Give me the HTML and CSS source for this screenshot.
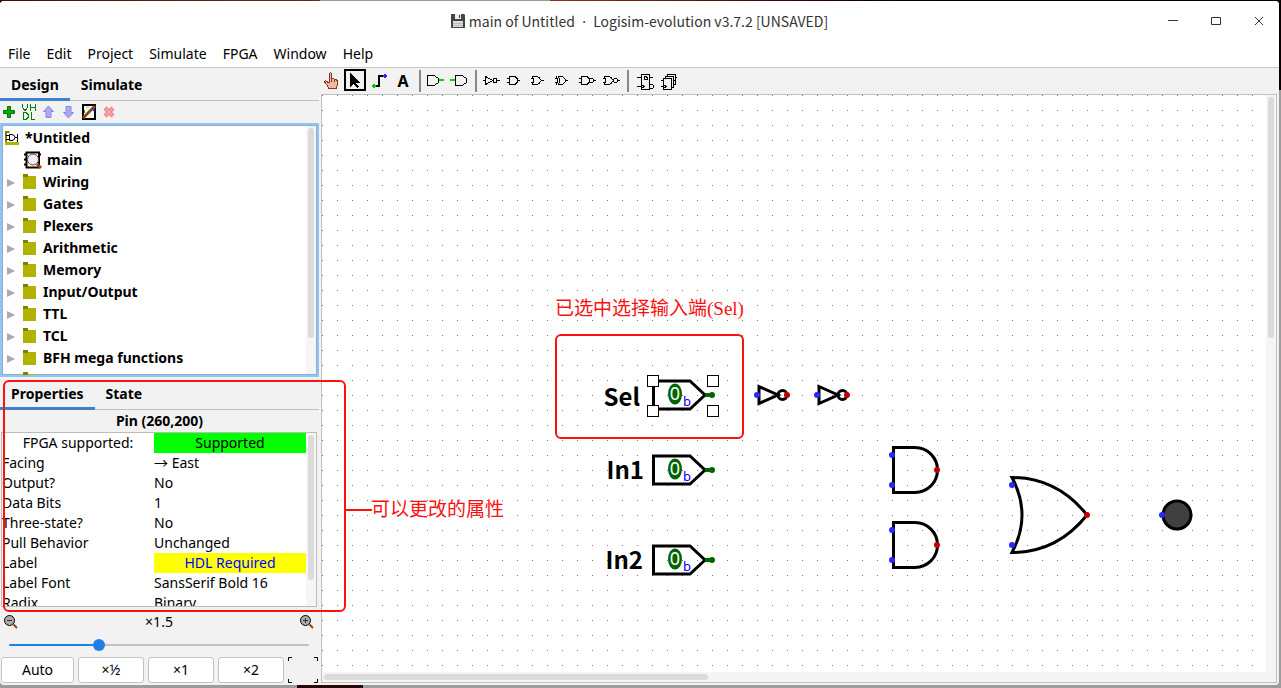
FILE: index.html
```html
<!DOCTYPE html>
<html lang="en">
<head>
<meta charset="UTF-8">
<title>main of Untitled · Logisim-evolution v3.7.2 [UNSAVED]</title>
<link rel="stylesheet" href="styles.css">
</head>
<body>
<div class="desktop-top"></div>
<div class="window">
  <header class="titlebar">
    <svg class="floppy" width="14" height="14" viewBox="0 0 14 14">
      <path d="M0 0H13L14 1V14H0Z" fill="#444"/>
      <path d="M4 0H10V5H4Z" fill="#eee"/>
      <path d="M8 1H9V4H8Z" fill="#333"/>
      <path d="M2 7H12V13H2Z" fill="#ddd"/>
      <path d="M2 9.500H12M2 11.500H12" stroke="#bbb"/>
    </svg>
    <h1>main of Untitled<span class="dot">&nbsp; ·&nbsp; </span>Logisim-evolution v3.7.2 [UNSAVED]</h1>
    <div class="window-buttons">
      <button aria-label="Minimize"><svg width="12" height="12"><path d="M1 5.500H11"/></svg></button>
      <button aria-label="Maximize"><svg width="12" height="12"><path d="M1.500 2.500H10.500V9.500H1.500Z"/></svg></button>
      <button aria-label="Close"><svg width="12" height="12"><path d="M2 2L10 10M10 2L2 10"/></svg></button>
    </div>
  </header>

  <nav class="menubar">
    <button>File</button>
    <button>Edit</button>
    <button>Project</button>
    <button>Simulate</button>
    <button>FPGA</button>
    <button>Window</button>
    <button>Help</button>
  </nav>

  <div class="workspace">
    <aside class="sidebar">
      <div class="tabs">
        <button class="tab active">Design</button>
        <button class="tab">Simulate</button>
      </div>
      <div class="tree-tools">
        <button aria-label="Add circuit"><svg width="14" height="20"><path d="M5.500 4.500H8.500V8.500H12.500V11.500H8.500V15.500H5.500V11.500H1.500V8.500H5.500Z" fill="#00b000" stroke="#006c00"/></svg></button>
        <button aria-label="Add VHDL"><svg width="14" height="20" fill="none" stroke="#008000" shape-rendering="crispEdges"><path d="M.5 2V5L3 9L5.500 5V2M8.500 2V9M13.500 2V9M8.500 5.500H13.500M1.500 10.500V17.500H4L6.500 15V13L4 10.500ZM9.500 10V17.500H13"/></svg></button>
        <button aria-label="Move up"><svg width="14" height="20"><path d="M6.500 4L11.500 9.500H9V15.500H4V9.500H1.500Z" fill="#a9a9f8" stroke="#8888e0"/></svg></button>
        <button aria-label="Move down"><svg width="14" height="20"><path d="M6.500 16L11.500 10.500H9V4.500H4V10.500H1.500Z" fill="#a9a9f8" stroke="#8888e0"/></svg></button>
        <button aria-label="Edit appearance"><svg width="14" height="20"><path d="M1 3H13V17H1Z" fill="#fff" stroke="#000" stroke-width="2"/><path d="M4 5H7M5 6V7" stroke="#bbb"/><path d="M2.500 8V11" stroke="#0a0"/><path d="M12 7V9" stroke="#22f" stroke-width="2"/><path d="M1 16L13 4" stroke="#8b4513" stroke-width="3"/></svg></button>
        <button aria-label="Delete circuit"><svg width="14" height="20"><path d="M3 6L11 14M11 6L3 14" stroke="#e27878" stroke-width="4"/><path d="M3 6L11 14M11 6L3 14" stroke="#f8a8a8" stroke-width="2"/></svg></button>
      </div>

      <div class="tree">
        <ul>
          <li class="root"><svg width="16" height="16"><path d="M1 1H5L6 3H13V15H1Z" fill="#808000"/><path d="M3 3H13V12H3Z" fill="#fff"/><path d="M1 12H15V15H1Z" fill="#b2b200"/><path d="M2 5.500H5M2 9.500H5M5.500 4.500H8Q11 5 11 7.500Q11 10 8 10.500H5.500ZM11 7.500H13M13.500 4V12" fill="none" stroke="#000"/></svg>*Untitled</li>
          <li class="circuit"><svg width="20" height="20"><path d="M3.500 2.500H16V17.500H3.500Z" fill="#fff" stroke="#000" stroke-width="2"/><path d="M1 4.500H3M1 9.500H3M1 14.500H3M16 4.500H18" stroke="#000" stroke-width="2"/><circle cx="10" cy="9.500" r="5.500" fill="#eeeeff" stroke="#804020"/><path d="M14 14L18 18" stroke="#8b4513" stroke-width="3"/></svg>main</li>
          <li><i class="twisty"></i><i class="folder"></i>Wiring</li>
          <li><i class="twisty"></i><i class="folder"></i>Gates</li>
          <li><i class="twisty"></i><i class="folder"></i>Plexers</li>
          <li><i class="twisty"></i><i class="folder"></i>Arithmetic</li>
          <li><i class="twisty"></i><i class="folder"></i>Memory</li>
          <li><i class="twisty"></i><i class="folder"></i>Input/Output</li>
          <li><i class="twisty"></i><i class="folder"></i>TTL</li>
          <li><i class="twisty"></i><i class="folder"></i>TCL</li>
          <li><i class="twisty"></i><i class="folder"></i>BFH mega functions</li>
          <li><i class="folder last"></i></li>
        </ul>
        <div class="scroll-y"><div class="thumb tree-thumb"></div></div>
      </div>

      <div class="tabs">
        <button class="tab active">Properties</button>
        <button class="tab">State</button>
      </div>
      <h2>Pin (260,200)</h2>
      <div class="properties">
        <table>
          <tr><th class="center">FPGA supported:</th><td class="supported">Supported</td></tr>
          <tr><th>Facing</th><td>→ East</td></tr>
          <tr><th>Output?</th><td>No</td></tr>
          <tr><th>Data Bits</th><td>1</td></tr>
          <tr><th>Three-state?</th><td>No</td></tr>
          <tr><th>Pull Behavior</th><td>Unchanged</td></tr>
          <tr><th>Label</th><td class="required">HDL Required</td></tr>
          <tr><th>Label Font</th><td>SansSerif Bold 16</td></tr>
          <tr><th>Radix</th><td>Binary</td></tr>
        </table>
        <div class="scroll-y"><div class="thumb property-thumb"></div></div>
      </div>

      <div class="zoom-row">
        <svg width="16" height="16"><circle cx="6.500" cy="6.500" r="5" fill="#aaa" stroke="#000"/><path d="M4 6.500H9" stroke="#333"/><path d="M10.500 10.500L14 14" stroke="#8b4513" stroke-width="2"/></svg>
        <label for="zoom">×1.5</label>
        <svg width="16" height="16"><circle cx="6.500" cy="6.500" r="5" fill="#aaa" stroke="#000"/><path d="M4 6.500H9M6.500 4V9" stroke="#333"/><path d="M10.500 10.500L14 14" stroke="#8b4513" stroke-width="2"/></svg>
      </div>
      <input class="slider" id="zoom" type="range" min="0" max="100" value="29">
      <div class="zoom-buttons">
        <button class="auto">Auto</button>
        <button>×½</button>
        <button>×1</button>
        <button>×2</button>
        <svg width="30" height="27" fill="none" stroke="#000"><path d="M.5 4V.5H4M26 .5H29.500V4M.5 22V25.500H4M26 25.500H29.500V22"/></svg>
      </div>
    </aside>

    <main class="editor">
      <div class="toolbar">
        <button aria-label="Poke"><svg><path d="M10.500 4.500L11.500 3.500L12.500 5V10L14 9L15.500 10.500L17 10L18.500 12V16L17 19.500H9.500L8 16L5.500 13L6.500 11.500L10 14Z" fill="#f4b8a0" stroke="#803820"/><path d="M12.500 10V13M15.500 10.500V13" stroke="#803820"/></svg></button>
        <button aria-label="Select" class="selected"><svg><path d="M2 1H22V21H2Z" fill="none" stroke="#000" stroke-width="2"/><path d="M7 4L18 14H13L16 18L14 19L11 15L7 18Z" fill="#000"/></svg></button>
        <button aria-label="Wiring"><svg><path d="M7 17H12V7H18" fill="none" stroke="#000" stroke-width="2"/><path d="M5 17H9M7 15V19" stroke="#00c800" stroke-width="2"/><path d="M15.500 6.500H20M18 4.500V8.500" stroke="#2828ff" stroke-width="2"/></svg></button>
        <button aria-label="Text" class="text-tool">A</button>
        <hr>
        <button aria-label="Input pin"><svg><path d="M4.500 6.500H11L15.500 9.500V13.500L11 16.500H4.500Z" class="gate"/><path d="M16 11H21" stroke="#00d800" stroke-width="2"/></svg></button>
        <button aria-label="Output pin"><svg><path d="M3 11H9" stroke="#00d800" stroke-width="2"/><path d="M8.500 6.500H15L19.500 9.500V13.500L15 16.500H8.500Z" class="gate"/></svg></button>
        <hr>
        <button aria-label="NOT gate"><svg><path d="M4 11.500H6.500V7.500L14 11.500L6.500 15.500V11.500M18 11.500H21" class="gate"/><circle cx="16" cy="11.500" r="2" class="gate"/></svg></button>
        <button aria-label="AND gate"><svg><path d="M4 9.500H6.500M4 13.500H6.500M6.500 7.500H11Q14.500 8 14.500 11.500Q14.500 15 11 15.500H6.500ZM14.500 11.500H17" class="gate"/></svg></button>
        <button aria-label="OR gate"><svg><path d="M4 9.500H7M4 13.500H7M5.500 7.500H10Q12 8 14.500 11.500Q12 15 10 15.500H5.500Q8 11.500 5.500 7.500M14.500 11.500H17" class="gate"/></svg></button>
        <button aria-label="XOR gate"><svg><path d="M4 9.500H7M4 13.500H7M7.500 7.500H11Q13 8 15 11.500Q13 15 11 15.500H7.500Q10 11.500 7.500 7.500M5 7.500Q7.500 11.500 5 15.500M15 11.500H17" class="gate"/></svg></button>
        <button aria-label="NAND gate"><svg><path d="M4 9.500H6.500M4 13.500H6.500M6.500 7.500H11Q14.500 8 14.500 11.500Q14.500 15 11 15.500H6.500ZM18 11.500H21" class="gate"/><circle cx="16.500" cy="11.500" r="2" class="gate"/></svg></button>
        <button aria-label="NOR gate"><svg><path d="M4 9.500H7M4 13.500H7M5.500 7.500H10Q12 8 14.500 11.500Q12 15 10 15.500H5.500Q8 11.500 5.500 7.500M18 11.500H21" class="gate"/><circle cx="16.500" cy="11.500" r="2" class="gate"/></svg></button>
        <hr>
        <button aria-label="D flip-flop"><svg><path d="M10.500 5.500H18.500V20.500H10.500ZM6 8.500H10M6 17.500H10M10.500 15.500L13 17.500L10.500 19.500M18.500 8.500H22" class="gate"/><path d="M13.500 7.500H15L16 8.500V10.500H13.500Z" class="gate"/><circle cx="20.500" cy="17.500" r="2" class="gate"/></svg></button>
        <button aria-label="Register"><svg><path d="M12.500 8V5.500H20.500V15.500H18.500M10.500 10V7.500H18.500V18.500H16.500" class="gate"/><path d="M8.500 9.500H16.500V20.500H8.500ZM6 11.500H8M6 17.500H8M8.500 15.500L11 17.500L8.500 19.500M20 8.500H22M18 11.500H20" class="gate"/></svg></button>
      </div>

      <div class="canvas">
        <svg class="circuit-view" width="100%" height="100%">
          <defs>
            <pattern id="grid" width="15" height="15" patternUnits="userSpaceOnUse"><rect width="1" height="1" fill="#777"/></pattern>
            <g id="pin">
              <path d="M-58.500 -14H-22L-7 0L-22 14H-58.500Z" fill="none" stroke="#000" stroke-width="3"/>
              <path d="M-7 0H0" stroke="#006400" stroke-width="4"/>
              <circle r="3" fill="#006400"/>
              <ellipse cx="-37" cy="-1" rx="7" ry="10.500" fill="#006400"/>
              <text x="-37" y="5" class="pin-value">0</text>
              <text x="-29" y="11" class="pin-radix">b</text>
            </g>
            <g id="not">
              <path d="M2 -8.500L21 0L2 8.500Z" fill="none" stroke="#000" stroke-width="3"/>
              <circle cx="25.500" r="4.500" fill="none" stroke="#000" stroke-width="3"/>
              <circle r="3" class="in"/><circle cx="30" r="3" class="out"/>
            </g>
            <g id="and">
              <path d="M-43.500 -22.500H-22A22.500 22.500 0 0 1 -22 22.500H-43.500Z" fill="none" stroke="#000" stroke-width="3"/>
              <circle cx="-45" cy="-15" r="3" class="in"/><circle cx="-45" cy="15" r="3" class="in"/><circle r="3" class="out"/>
            </g>
            <g id="or">
              <path d="M-75 -37.500Q-30 -37.500 0 0Q-30 37.500 -75 37.500Q-55 0 -75 -37.500Z" fill="none" stroke="#000" stroke-width="3"/>
              <circle cx="-75" cy="-30" r="3" class="in"/><circle cx="-75" cy="30" r="3" class="in"/><circle r="3" class="out"/>
            </g>
          </defs>
          <rect width="100%" height="100%" fill="url(#grid)"/>
          <use href="#pin" x="390" y="300"/>
          <use href="#pin" x="390" y="375"/>
          <use href="#pin" x="390" y="465"/>
          <text x="318" y="311" class="pin-label">Sel</text>
          <text x="322" y="384" class="pin-label">In1</text>
          <text x="321" y="474" class="pin-label">In2</text>
          <g fill="#fff" stroke="#000">
            <rect x="325.500" y="280.500" width="11" height="11"/>
            <rect x="385.500" y="280.500" width="11" height="11"/>
            <rect x="325.500" y="310.500" width="11" height="11"/>
            <rect x="385.500" y="310.500" width="11" height="11"/>
          </g>
          <use href="#not" x="435" y="300"/>
          <use href="#not" x="495" y="300"/>
          <use href="#and" x="615" y="375"/>
          <use href="#and" x="615" y="450"/>
          <use href="#or" x="765" y="420"/>
          <circle cx="855" cy="420" r="14" fill="#404040" stroke="#000" stroke-width="3"/>
          <circle cx="840" cy="420" r="3" class="in"/>
        </svg>
        <div class="scroll-y"><div class="thumb canvas-thumb"></div></div>
        <div class="scroll-x"><div class="thumb-x"></div></div>
      </div>
    </main>
  </div>
</div>

<!-- notes over the window -->
<div class="note-box properties-box"></div>
<div class="note-line"></div>
<div class="note properties-note" lang="zh">可以更改的属性</div>
<div class="note-box sel-box"></div>
<div class="note sel-note" lang="zh">已选中选择输入端(Sel)</div>
</body>
</html>
```
FILE: styles.css
```css
* { box-sizing: border-box; }
body { margin: 0; height: 100vh; display: flex; flex-direction: column; overflow: hidden; padding: 0 2px 3px 0; font-family: "Noto Sans", "Noto Sans CJK SC", sans-serif; font-size: 14px; line-height: 20px; color: #000;
  background: linear-gradient(#2a0808, #2a0808) 297px 100% / 66px 3px no-repeat, linear-gradient(#0a0000 90px, #9c9c9c 90px); }
button { font: inherit; color: inherit; border: 0; background: none; padding: 0; }
svg { display: block; flex: none; }
ul { list-style: none; margin: 0; padding: 0; }

.desktop-top { height: 1px; flex: none; background: linear-gradient(90deg, #4a0808, #702820 25%, #9c9c9c 25%, #9c9c9c 43%, #903020 43%, #200 65%, #000 75%); }
.window { flex: 1; min-height: 0; display: flex; flex-direction: column; background: #f2f2f2; border-radius: 4px; overflow: hidden; }

.titlebar { height: 40px; flex: none; display: flex; align-items: center; justify-content: center; gap: 4px; position: relative; background: #fff; color: #333; }
.titlebar h1 { margin: 0; font: 14px/20px "Noto Sans CJK SC", sans-serif; }
.titlebar .dot { font-family: "Noto Sans", sans-serif; }
.window-buttons { position: absolute; right: 14px; top: 14px; display: flex; gap: 31px; }
.window-buttons svg { fill: none; stroke: #333; }

.menubar { height: 27px; flex: none; display: flex; gap: 16px; padding: 0 8px; background: #fff; border-bottom: 1px solid #c8c8c8; }

.workspace { flex: 1; min-height: 0; display: flex; }
.sidebar { width: 319px; flex: none; display: flex; flex-direction: column; }
.tabs { height: 33px; flex: none; display: flex; border-bottom: 1px solid #c0c0c0; font-weight: bold; }
.tab { height: 33px; padding: 1px 11px 0; font-weight: bold; }
.tab.active { border-bottom: 3px solid #3d80cc; padding-top: 3px; }
.tree-tools { height: 22px; flex: none; display: flex; align-items: center; gap: 6px; padding-left: 2px; }

.tree { flex: 248 1 0; min-height: 0; position: relative; overflow: hidden; background: #fff; border: 2px solid #97c3f0; outline: 1px solid #87afda; outline-offset: -3px; padding: 2px 0 0 2px; font-weight: bold; }
.tree li { height: 22px; display: flex; align-items: center; }
.root svg { margin-right: 5px; }
.circuit svg { margin: 0 4px 0 19px; }
.twisty { width: 0; border-left: 8px solid #aaa; border-top: 4px solid transparent; border-bottom: 4px solid transparent; margin: 1px 8px 0 3px; }
.folder { width: 13px; height: 13px; margin: 1px 7px 0 0; background: #b2b200; position: relative; }
.folder::before { content: ""; position: absolute; left: 0; top: -2px; width: 5px; height: 3px; background: #808000; }
.folder.last { margin-left: 19px; }

.scroll-y { position: absolute; top: 0; right: 0; bottom: 0; width: 10px; background: #f5f5f5; }
.thumb { position: absolute; left: 2px; top: 2px; width: 6px; border-radius: 3px; background: #dbdbdb; }
.tree .scroll-y { top: 1px; right: 1px; bottom: 1px; }
.tree-thumb { height: 210px; }
.property-thumb { height: 145px; }
.canvas-thumb { height: 241px; }

h2 { margin: 0; height: 22px; flex: none; font-size: 14px; line-height: 21px; text-align: center; }
.properties { flex: 173 1 0; min-height: 0; margin: 0 2px 0 1px; position: relative; overflow: hidden; background: #fff; border: 1px solid #bcbcbc; }
.properties table { width: calc(100% - 10px); table-layout: fixed; border-collapse: collapse; }
.properties tr { height: 20px; }
.properties th, .properties td { padding: 0; width: 50%; font-weight: normal; text-align: left; white-space: nowrap; }
.properties .center { text-align: center; }
.properties .supported { background: #0f0; text-align: center; }
.properties .required { background: #ff0; color: #00f; text-align: center; }

.zoom-row { height: 30px; flex: none; display: flex; align-items: center; justify-content: space-between; padding: 0 4px 0 3px; }
.slider { appearance: none; flex: none; width: 300px; height: 14px; margin: 1px 0 5px 9px; background: none; }
.slider::-webkit-slider-runnable-track { height: 2px; border-radius: 1px; background: linear-gradient(90deg, #2080e8 30%, #c2c2c2 30%); }
.slider::-webkit-slider-thumb { appearance: none; width: 12px; height: 12px; margin-top: -5px; border-radius: 50%; background: #1f80e8; }
.zoom-buttons { height: 28px; flex: none; display: flex; gap: 4px; padding-left: 1px; }
.zoom-buttons button { width: 66px; height: 26px; background: #fff; border: 1px solid #c4c4c4; border-radius: 3px; line-height: 24px; }
.zoom-buttons .auto { width: 73px; }

.editor { flex: 1; min-width: 0; display: flex; flex-direction: column; }
.toolbar { height: 26px; flex: none; display: flex; padding-top: 1px; }
.toolbar button { width: 24px; height: 24px; flex: none; }
.toolbar svg { width: 24px; height: 24px; shape-rendering: crispEdges; }
.toolbar hr { width: 2px; height: 22px; margin: 1px 2px 0 4px; border: 0; background: #888; }
.toolbar .text-tool { font-weight: bold; font-size: 16px; }
.gate { fill: none; stroke: #000; }

.canvas { flex: 1; min-height: 0; margin: 0 2px 2px 2px; position: relative; background: #fff; border: 1px solid #c0c0c0; padding: 0 10px 10px 0; }
.circuit-view { overflow: hidden; }
.scroll-x { position: absolute; left: 0; right: 0; bottom: 0; height: 10px; background: #f5f5f5; }
.thumb-x { width: 384px; height: 6px; margin: 2px; border-radius: 3px; background: #dbdbdb; }
.in { fill: #2828ff; }
.out { fill: #c00000; }
.pin-label { font: bold 24px "Noto Sans CJK SC", sans-serif; text-anchor: end; }
.pin-value { font: 18px "Noto Sans", sans-serif; fill: #fff; text-anchor: middle; }
.pin-radix { font: 13px "Noto Sans", sans-serif; fill: #00f; }

.note-box { position: absolute; border: 2px solid #fc1010; border-radius: 6px; }
.properties-box { left: 3px; top: 380px; width: 343px; height: 232px; }
.sel-box { left: 555px; top: 334px; width: 189px; height: 105px; }
.note-line { position: absolute; left: 346px; top: 509px; width: 26px; height: 2px; background: #fc1010; }
.note { position: absolute; font: 19px/24px "Liberation Serif", "Noto Sans CJK SC", serif; color: #fc1010; white-space: nowrap; }
.properties-note { left: 371px; top: 498px; }
.sel-note { left: 555px; top: 297px; }
```
